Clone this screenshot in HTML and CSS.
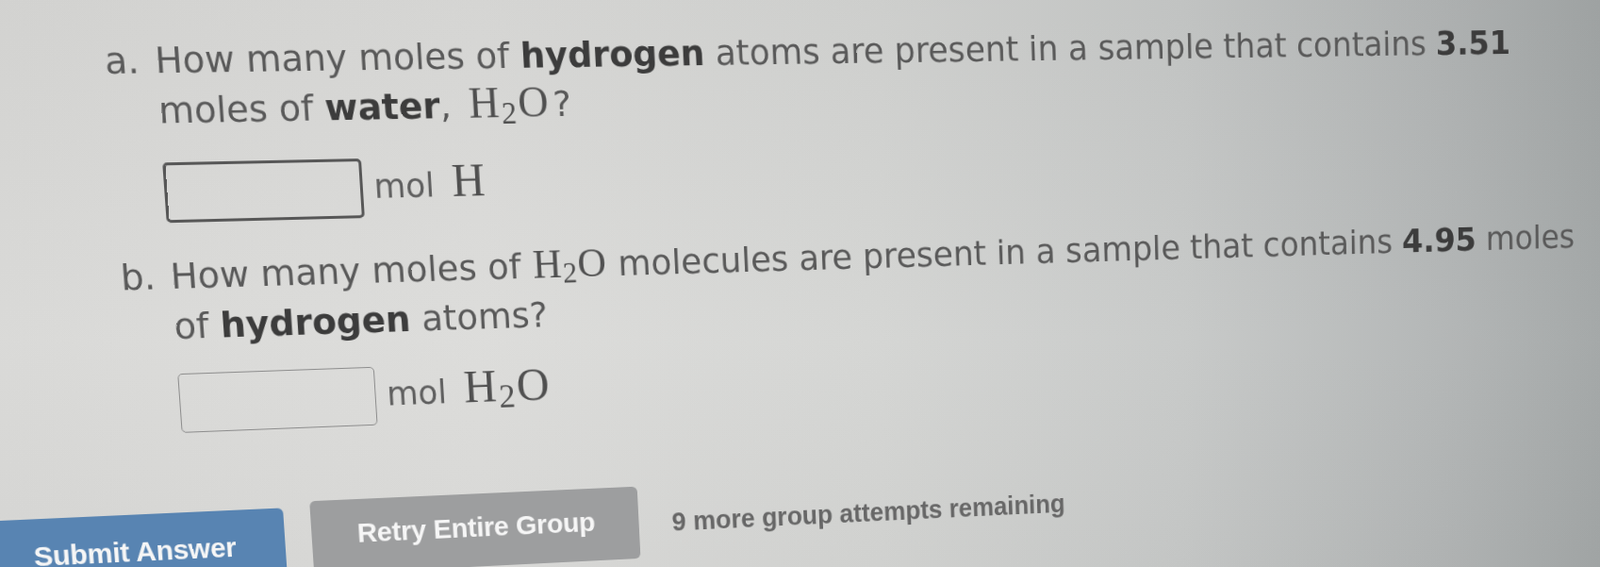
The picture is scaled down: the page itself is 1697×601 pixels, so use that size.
FILE: index.html
```html
<!DOCTYPE html>
<html lang="en">
<head>
<meta charset="utf-8">
<title>Moles of hydrogen</title>
<link rel="stylesheet" href="styles.css">
</head>
<body>
<div class="sheet">
  <div class="question q-a">
    <div class="label">a.</div>
    <div class="content">
      <p class="prompt">How many moles of <b>hydrogen</b> atoms are present in a sample that contains <b>3.51</b><br>moles of <b>water</b>, <span class="math math-wide">H<sub>2</sub>O</span>?</p>
      <div class="answer answer-a">
        <input class="field field-a" type="text" aria-label="mol H">
        <span class="unit">mol <span class="math">H</span></span>
      </div>
    </div>
  </div>
  <div class="question q-b">
    <div class="label">b.</div>
    <div class="content">
      <p class="prompt">How many moles of <span class="math math-tight">H<sub>2</sub>O</span> molecules are present in a sample that contains <b>4.95</b> moles<br>of <b>hydrogen</b> atoms?</p>
      <div class="answer answer-b">
        <input class="field field-b" type="text" aria-label="mol H2O">
        <span class="unit">mol <span class="math">H<sub>2</sub>O</span></span>
      </div>
    </div>
  </div>
  <div class="actions">
    <button class="btn btn-submit" type="button">Submit Answer</button>
    <button class="btn btn-retry" type="button">Retry Entire Group</button>
    <span class="attempts">9 more group attempts remaining</span>
  </div>
</div>
</body>
</html>
```
FILE: styles.css
```css
html, body {
  margin: 0;
  height: 100%;
  overflow: hidden;
}

body {
  background:
    linear-gradient(180deg, rgba(0,0,0,0.03) 0%, rgba(255,255,255,0.02) 60%, rgba(0,0,0,0.02) 100%),
    linear-gradient(90deg, #d9d9d7 0%, #dcdcda 30%, #d4d5d3 55%, #c7c9c8 74%, #b3b6b6 90%, #a3a7a7 100%);
  font-family: "DejaVu Sans", Verdana, sans-serif;
  color: #595959;
}

.sheet {
  width: 1900px;
  box-sizing: border-box;
  padding: 60.6px 0 0 200px;
  transform-origin: 0 0;
  transform: matrix3d(1.056644, -0.0093782, 0, 0.000069544,
                      0.082624, 1.052725, 0, 0.000045322,
                      0, 0, 1, 0,
                      -105.527, -23.9584, 0, 1);
}

.question {
  display: flex;
  font-size: 38px;
  line-height: 52.5px;
}

.q-b {
  margin-top: 30.5px;
}

.label {
  width: 52px;
  flex: none;
}

.content {
  flex: none;
}

.prompt {
  margin: 0;
  white-space: nowrap;
}

.prompt b {
  color: #3c3c3c;
  font-weight: bold;
}

.math {
  font-family: "Liberation Serif", "Times New Roman", serif;
  font-size: 44px;
  line-height: 0;
  color: #505050;
  padding: 0 2px;
}

.math-wide {
  font-size: 46px;
  padding: 0 5px 0 7px;
}

.math-tight {
  padding: 0 1px;
}

.math sub {
  font-size: 0.72em;
  line-height: 0;
  vertical-align: -0.2em;
  margin: 0 2px;
}

.math-tight sub {
  margin: 0 1px;
}

.answer {
  display: flex;
  align-items: flex-start;
}

.answer-a {
  margin-top: 27px;
}

.answer-b {
  margin-top: 24px;
}

.field {
  width: 210px;
  height: 63px;
  box-sizing: border-box;
  margin: 0;
  padding: 0;
  background: transparent;
  border-radius: 5px;
  outline: none;
}

.field-a {
  border: 3px solid #575757;
}

.field-b {
  border: 1.5px solid #8c8c8c;
}

.unit {
  margin-left: 12px;
  font-size: 35px;
  line-height: 60px;
  color: #5f5f5f;
  white-space: nowrap;
}

.unit .math {
  font-size: 50px;
  padding-left: 8px;
}

.actions {
  display: flex;
  align-items: flex-start;
  margin-top: 79px;
  margin-left: -165px;
}

.btn {
  display: flex;
  align-items: center;
  justify-content: center;
  box-sizing: border-box;
  margin: 0;
  padding: 0;
  border: none;
  border-radius: 6px;
  font-family: "Liberation Sans", Arial, sans-serif;
  font-weight: bold;
  font-size: 30px;
  color: #f6f6f6;
  letter-spacing: -0.3px;
}

.btn-submit {
  width: 319px;
  height: 86px;
  margin-top: 6px;
  padding-bottom: 6px;
  background: #5884b2;
}

.btn-retry {
  width: 362px;
  height: 80px;
  padding-bottom: 6px;
  margin-left: 29px;
  background: #9d9e9f;
}

.attempts {
  margin-left: 37.5px;
  margin-top: 24px;
  font-family: "Liberation Sans", Arial, sans-serif;
  font-weight: bold;
  font-size: 29px;
  line-height: 34px;
  color: #676767;
  white-space: nowrap;
}
```
